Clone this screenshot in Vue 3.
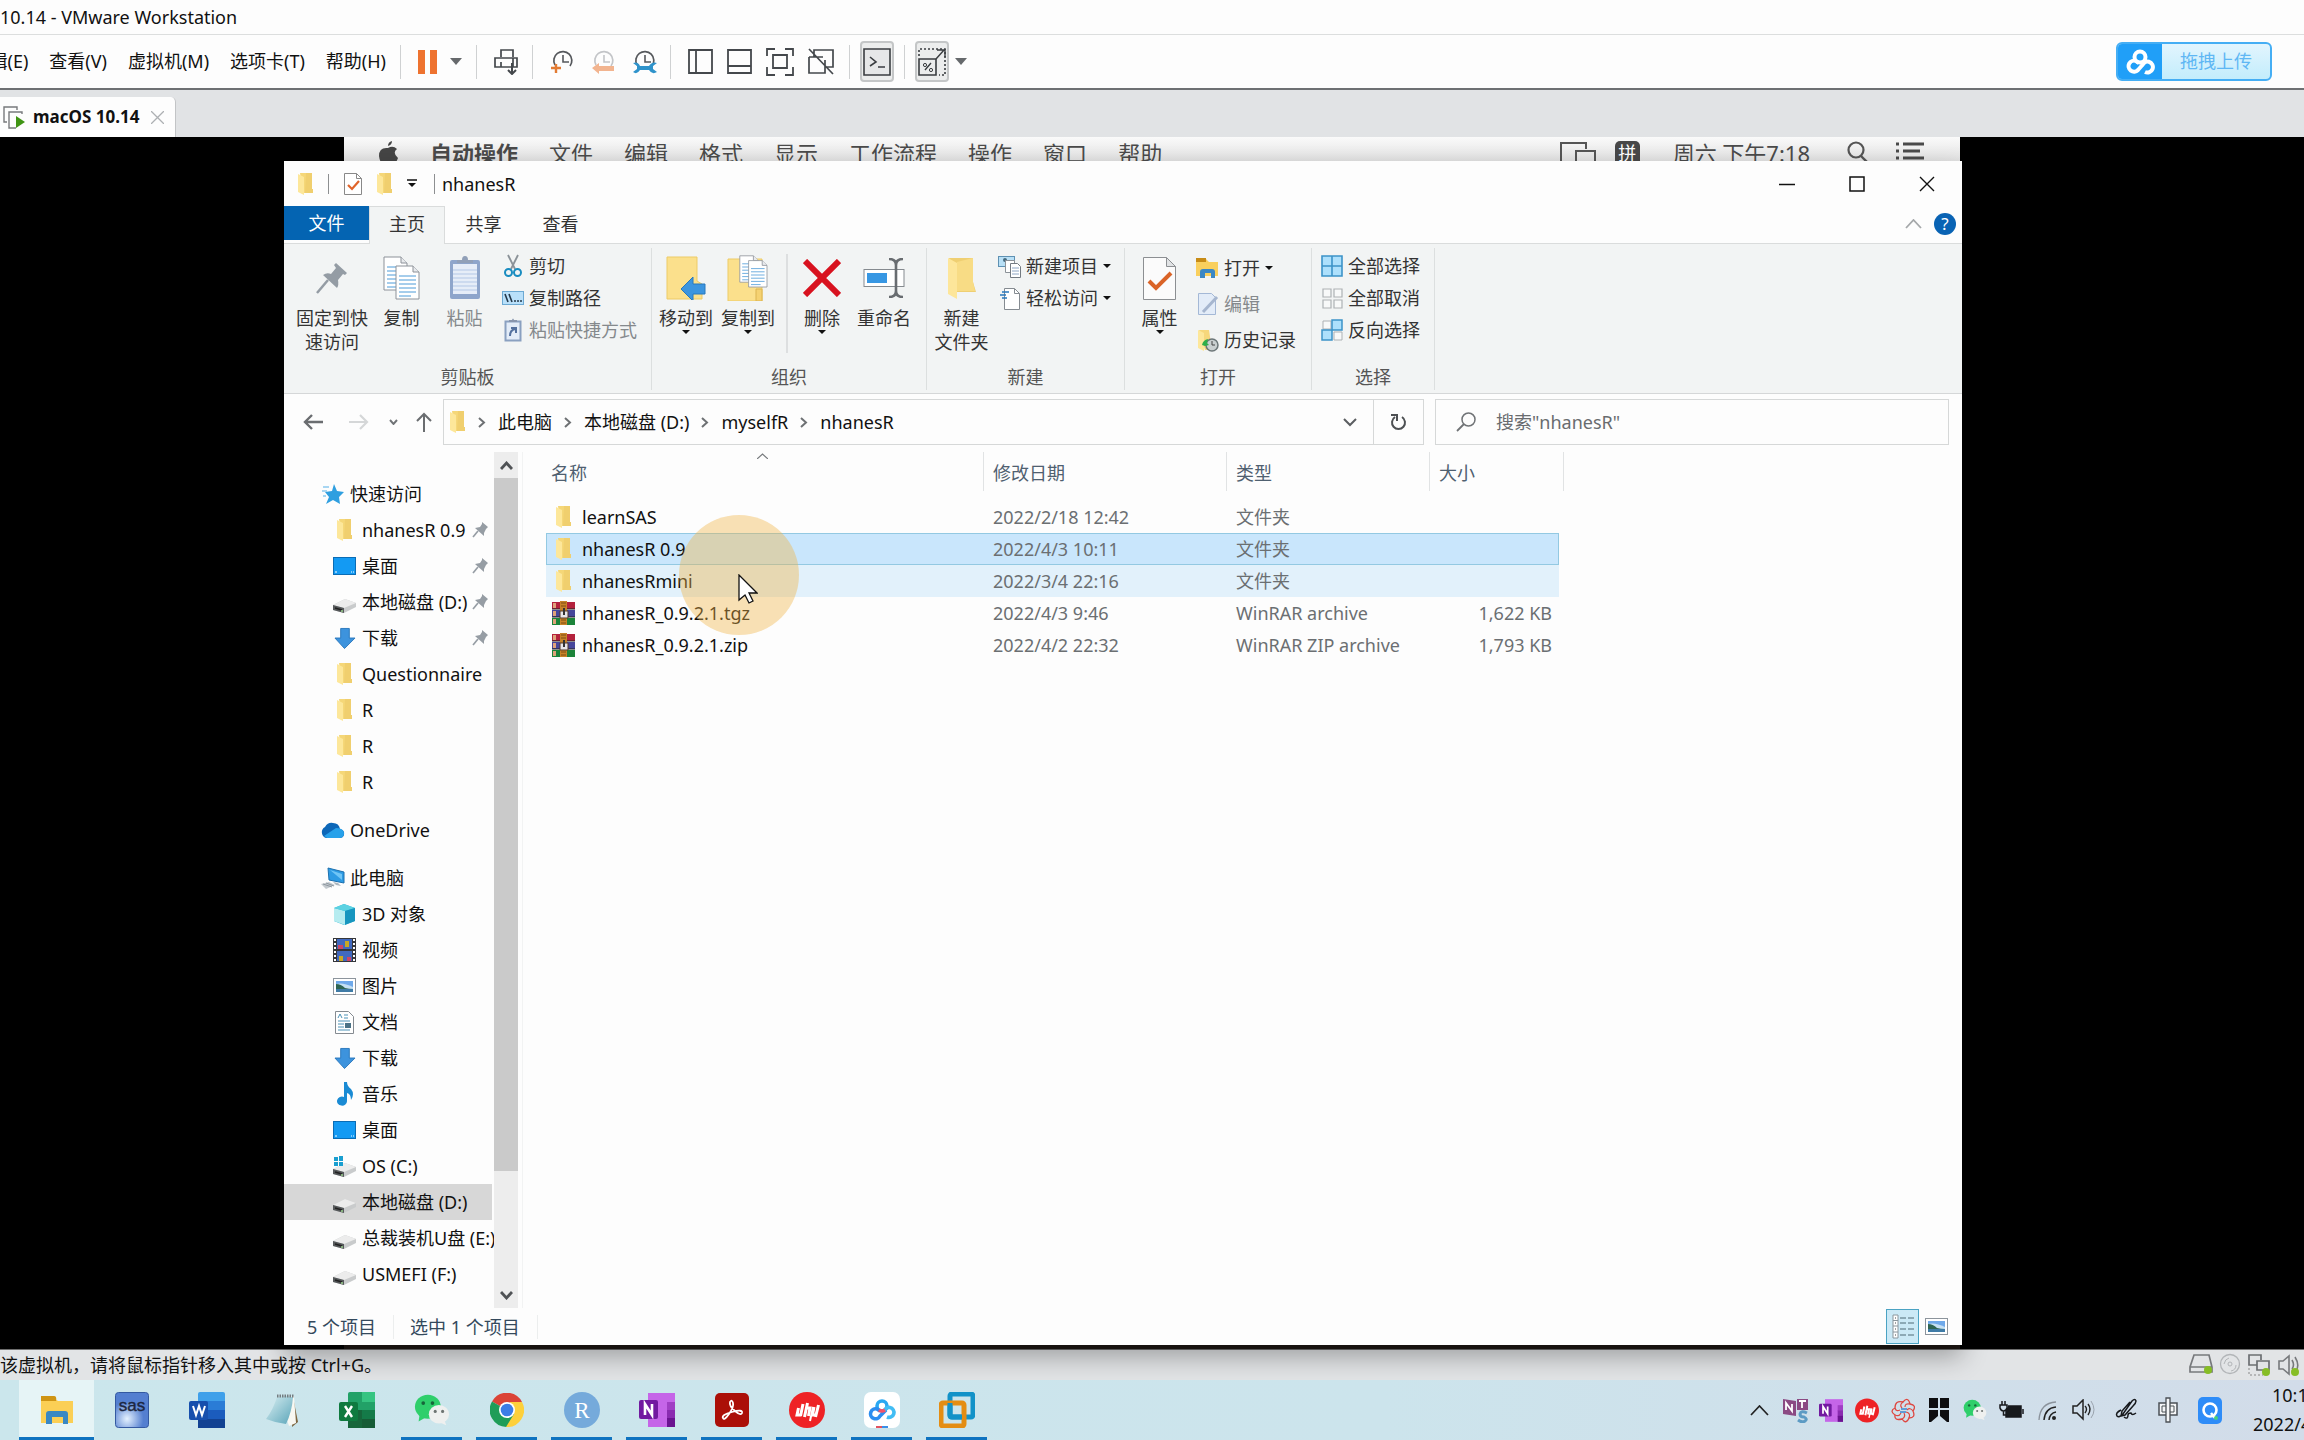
<template>
  <div class="desktop">
    <header class="vm-title">10.14 - VMware Workstation</header>

    <div class="vm-toolbar">
      <nav class="vm-menu">
        <button v-for="item in vmMenu" :key="item">{{ item }}</button>
      </nav>
      <div class="tool-group">
        <button class="tool" aria-label="暂停"><Icon name="pause" /></button>
        <button class="tool slim" aria-label="电源选项"><Icon name="caretGrey" /></button>
      </div>
      <div class="tool-group"><button class="tool" aria-label="发送"><Icon name="send" /></button></div>
      <div class="tool-group wide">
        <button v-for="n in ['snapTake', 'snapRevert', 'snapManage']" :key="n" class="tool" :aria-label="n"><Icon :name="n" /></button>
      </div>
      <div class="tool-group views">
        <button v-for="n in ['viewSide', 'viewBottom', 'viewFull', 'viewUnity']" :key="n" class="tool" :aria-label="n"><Icon :name="n" /></button>
      </div>
      <div class="tool-group boxed"><button class="tool pressed" aria-label="控制台"><Icon name="console" /></button></div>
      <div class="tool-group boxed">
        <button class="tool pressed" aria-label="拉伸"><Icon name="stretch" /></button>
        <button class="tool slim" aria-label="拉伸选项"><Icon name="caretGrey" /></button>
      </div>
      <button class="upload">
        <span class="upload-logo"><Icon name="netdisk" /></span>
        <span class="upload-text">拖拽上传</span>
      </button>
    </div>

    <div class="vm-tabs">
      <div class="vm-tab">
        <Icon name="vmRunning" />
        <span>macOS 10.14</span>
        <button aria-label="关闭标签"><Icon name="tabClose" /></button>
      </div>
    </div>

    <main class="vm-screen">
      <div class="mac-bar">
        <Icon name="apple" />
        <b>自动操作</b>
        <span v-for="item in macMenu" :key="item">{{ item }}</span>
        <div class="mac-right">
          <Icon name="macDisplays" />
          <span class="mac-ime">拼</span>
          <span class="mac-clock">周六 下午7:18</span>
          <Icon name="macSearch" />
          <Icon name="macList" />
        </div>
      </div>

      <section class="explorer">
        <div class="ex-title">
          <Icon name="folder" />
          <i class="bar"></i>
          <button aria-label="属性"><Icon name="docCheckSmall" /></button>
          <button aria-label="新建文件夹"><Icon name="folder" /></button>
          <button aria-label="自定义快速访问工具栏"><Icon name="qatCaret" /></button>
          <i class="bar last"></i>
          <h1>nhanesR</h1>
          <div class="win-buttons">
            <button aria-label="最小化"><Icon name="winMin" /></button>
            <button aria-label="最大化"><Icon name="winMax" /></button>
            <button aria-label="关闭"><Icon name="winClose" /></button>
          </div>
        </div>

        <div class="ex-tabs">
          <button class="file">文件</button>
          <button class="active">主页</button>
          <button>共享</button>
          <button>查看</button>
          <div class="ex-help">
            <button aria-label="折叠功能区"><Icon name="collapse" /></button>
            <button class="help" aria-label="帮助">?</button>
          </div>
        </div>

        <div class="ribbon">
          <div v-for="group in ribbon" :key="group.label" :class="['ribbon-group', group.id]">
            <div class="ribbon-body">
              <template v-for="(item, i) in group.big" :key="i">
                <i v-if="item.divider" class="divider"></i>
                <button v-else :class="['big', item.size, { off: item.off }]">
                  <span class="big-icon"><Icon :name="item.icon" /></span>
                  <span v-for="line in item.lines" :key="line" class="big-line">{{ line }}</span>
                  <Icon v-if="item.menu" name="caret" />
                </button>
              </template>
              <div class="small-list">
                <button v-for="item in group.small" :key="item.text" :class="{ off: item.off }">
                  <span class="small-icon"><Icon :name="item.icon" /></span>
                  {{ item.text }}
                  <Icon v-if="item.menu" name="caret" />
                </button>
              </div>
            </div>
            <div class="ribbon-label">{{ group.label }}</div>
          </div>
        </div>

        <div class="address-row">
          <button class="go" aria-label="后退"><Icon name="back" /></button>
          <button class="go" aria-label="前进"><Icon name="forward" /></button>
          <button class="go recent" aria-label="最近位置"><Icon name="chevDown" /></button>
          <button class="go up" aria-label="上移"><Icon name="up" /></button>
          <div class="address">
            <Icon name="folder" />
            <template v-for="part in path" :key="part">
              <Icon name="chevRight" />
              <button>{{ part }}</button>
            </template>
            <button class="drop" aria-label="以前的位置"><Icon name="chevDownBig" /></button>
            <button class="refresh" aria-label="刷新"><Icon name="refresh" /></button>
          </div>
          <label class="search">
            <Icon name="search" />
            <input v-model="query" type="text" placeholder='搜索"nhanesR"' aria-label="搜索" />
          </label>
        </div>

        <div class="ex-main">
          <nav class="tree">
            <ul v-for="(group, g) in tree" :key="g">
              <li v-for="(node, i) in group" :key="i" :class="{ child: i > 0, selected: node.selected }">
                <a href="#">
                  <span class="tree-icon"><Icon :name="node.icon" /></span>
                  <span>{{ node.text }}</span>
                </a>
                <Icon v-if="node.pin" class="tree-pin" name="pinSmall" />
              </li>
            </ul>
          </nav>
          <div class="scrollbar">
            <button aria-label="向上滚动"><Icon name="scrollUp" /></button>
            <div class="thumb"></div>
            <button aria-label="向下滚动"><Icon name="scrollDown" /></button>
          </div>
          <div class="list">
            <table>
              <thead>
                <tr>
                  <th class="c-name">名称<Icon class="sort" name="sortUp" /></th>
                  <th class="c-date">修改日期</th>
                  <th class="c-type">类型</th>
                  <th class="c-size">大小</th>
                  <th class="c-end"></th>
                </tr>
              </thead>
              <tbody>
                <tr v-for="file in files" :key="file.name" :class="file.state">
                  <td><div class="cell"><span class="file-icon"><Icon :name="file.icon" /></span>{{ file.name }}</div></td>
                  <td>{{ file.date }}</td>
                  <td>{{ file.type }}</td>
                  <td class="size">{{ file.size }}</td>
                </tr>
              </tbody>
            </table>
            <div class="halo"></div>
            <Icon class="cursor" name="cursor" />
          </div>
        </div>

        <footer class="ex-status">
          <span>5 个项目</span>
          <span>选中 1 个项目</span>
          <div class="ex-views">
            <button class="on" aria-label="详细信息"><Icon name="details" /></button>
            <button aria-label="大缩略图"><Icon name="picture" /></button>
          </div>
        </footer>
      </section>
      <div class="mac-edge"></div>
    </main>

    <div class="vm-status">
      <span>该虚拟机，请将鼠标指针移入其中或按 Ctrl+G。</span>
      <div class="vm-devices">
        <Icon v-for="n in ['devDisk', 'devCd', 'devNet', 'devSound']" :key="n" :name="n" />
      </div>
    </div>

    <footer class="taskbar">
      <div class="apps">
        <button v-for="app in apps" :key="app.icon" :class="{ running: app.running, active: app.active }" :aria-label="app.icon">
          <Icon :name="app.icon" />
        </button>
      </div>
      <div class="tray">
        <button v-for="n in tray" :key="n" :aria-label="n"><Icon :name="n" /></button>
      </div>
      <div class="tray ime">
        <button v-for="n in imeTray" :key="n" :aria-label="n"><Icon :name="n" /></button>
      </div>
      <div class="clock">
        <div>10:11</div>
        <div>2022/4/3</div>
      </div>
    </footer>
  </div>
</template>

<script setup>
import { ref, h } from 'vue';

const folderArt = '<path d="M3 1h12v16h1v4H6z" fill="#f5d778"/><path d="M9 1h6v16h1v4H8z" fill="#f0cf6e"/><path d="M1 2l6 3v18l-6-3z" fill="#fde79a"/>';
const sheet = (x, y) => `<path d="M${x} ${y}h17l6 6v27h-23z" fill="#fff" stroke="#8d9299"/><path d="M${x + 17} ${y}v6h6" fill="#e8eaed" stroke="#8d9299"/><path d="M${x + 3} ${y + 10}h17m-17 4h17m-17 4h17m-17 4h17m-17 4h17m-17 4h12" stroke="#4c9bd8"/>`;
const wechat = '<ellipse cx="15" cy="14" rx="14" ry="13" fill="#2fcf6b"/><path d="M6 23l-1 7 7-4z" fill="#2fcf6b"/><circle cx="10" cy="10" r="2" fill="#17653a"/><circle cx="20" cy="10" r="2" fill="#17653a"/><ellipse cx="27" cy="22" rx="11" ry="10" fill="#eef0ef"/><path d="M33 29l2 5-7-3z" fill="#eef0ef"/><circle cx="23" cy="19" r="1.7" fill="#6d7472"/><circle cx="31" cy="19" r="1.7" fill="#6d7472"/>';
const onenote = '<path d="M9 2h27v34H9z" fill="#c565e8"/><path d="M28 11h8v9h-8z" fill="#a03fc4"/><path d="M28 19h8v9h-8z" fill="#8a2bb0"/><path d="M28 27h8v9h-8z" fill="#6a1390"/><rect x="0" y="9" width="19" height="19" rx="2" fill="#721aa0"/><path d="M6 24V13l7 11V13" fill="none" stroke="#fff" stroke-width="2.6"/>';
const redApp = '<circle cx="18" cy="18" r="18" fill="#ee2225"/><path d="M9.500 16l-1.500 7h4M14 12l-2.500 12M18.500 11l-3 14M17.500 16h3.500l-1.500 8M25 15l-1.500 8h3M29.500 13l-3 12" fill="none" stroke="#fff" stroke-width="3"/><path d="M24 15l-3 14" stroke="#fff" stroke-width="2"/>';
const clockFace = '<path d="M5 16A9 9 0 1 1 20 17" fill="none" stroke="CLR" stroke-width="1.7"/><path d="M13 6v7h6" fill="none" stroke="CLR" stroke-width="1.6"/>';
const drive = '<path d="M0 15L12 9l11 4v4l-12 6-11-3z" fill="#c9cbcc"/><path d="M0 15l11 3 12-5-11-4z" fill="#ececec"/><path d="M0 15l11 3v5L0 20z" fill="#56595b"/><path d="M2 18l7 2" stroke="#222" stroke-width="1.500"/><circle cx="9" cy="21" r="1" fill="#9ad08c"/>';
const winrar = '<path d="M1 1h23v7H1z" fill="#b3213c"/><path d="M1 9h23v7H1z" fill="#46469b"/><path d="M1 17h23v7H1z" fill="#1b8339"/><path d="M1 8h23M1 16h23" stroke="#222"/><path d="M2 2h3v5H2zm0 8h3v5H2zm0 8h3v5H2z" fill="#dfa27a"/><path d="M9 0h7v24H9z" fill="#c78227"/><path d="M10 2h5m-5 3h5m-5 14h5m-5 3h5" stroke="#7d4c12"/><path d="M9 10h8v7H9z" fill="#e8e6ea" stroke="#553b2a"/><path d="M13 7v7" stroke="#333" stroke-width="2"/>';
const picture = '<rect x=".5" y=".5" width="22" height="16" fill="#fff" stroke="#8c949c"/><path d="M3 3h17v11H3z" fill="#6fa9ea"/><path d="M3 6q7-2 17 3v2H3z" fill="#c5e0f4"/><path d="M3 6q5 0 9 4 4 1 8 1H3z" fill="#2f6552"/><path d="M3 11h17v3H3z" fill="#3f7ba6"/>';
const download = '<path d="M7 1h9v10h6L11 22 1 11h6z" fill="#3d93dd" stroke="#2b79bd"/>';
const desktopIcon = '<rect x=".5" y=".5" width="22" height="17" fill="#139af3" stroke="#0a6cb5"/><path d="M2 15h2m14 0h1m1 0h1" stroke="#fff"/>';

// name: [width, height, markup, optional viewBox]
const icons = {
  pause: [20, 26, '<path d="M0 1h7v24H0zM12 1h7v24h-7z" fill="#ee7330"/>'],
  caretGrey: [12, 7, '<path d="M0 0h12L6 7z" fill="#66696c"/>'],
  caret: [8, 4, '<path d="M0 0h8L4 4z" fill="#111"/>'],
  send: [24, 26, '<path d="M7 8V1h12v7M1 9h22v9H1zM7 13v5M7 9h12v9" fill="none" stroke="#44484c" stroke-width="1.7"/><path d="M18 14v11m-4-4l4 4 4-4" fill="none" stroke="#44484c" stroke-width="2"/>'],
  snapTake: [26, 26, clockFace.replaceAll('CLR', '#55585c') + '<path d="M6 15v9M1 19h10" stroke="#e27b33" stroke-width="2.4"/>'],
  snapRevert: [26, 26, clockFace.replaceAll('CLR', '#c3c5c8') + '<path d="M1 19l7-5v3h15v5H8v3z" fill="#f2b48f"/>'],
  snapManage: [26, 26, clockFace.replaceAll('CLR', '#55585c') + '<path d="M1 14q5-2 7 3h9q3-5 8-3l-4 3v3l4 3q-5 3-8-2H8q-3 5-7 2l4-3v-3z" fill="#2f93cb"/>'],
  viewSide: [26, 26, '<path d="M1 1h23v23H1zM8 1v23" fill="none" stroke="#44484c" stroke-width="1.8"/>'],
  viewBottom: [26, 26, '<path d="M1 1h23v23H1zM1 17h23" fill="none" stroke="#44484c" stroke-width="1.8"/>'],
  viewFull: [28, 28, '<path d="M1 8V1h8m10 0h8v7m0 11v8h-8M9 27H1v-8M7 7h14v13H7z" fill="none" stroke="#44484c" stroke-width="1.8"/>'],
  viewUnity: [28, 28, '<path d="M7 9V2h19v17h-7M2 9h14m2 3v13H2V9M2 1l24 25" fill="none" stroke="#44484c" stroke-width="1.7"/>'],
  console: [28, 28, '<path d="M1 1h26v26H1z" fill="#e6e7e8" stroke="#3a3d40" stroke-width="1.6"/><path d="M7 9l6 5-6 4m8 1h7" fill="none" stroke="#3a3d40" stroke-width="1.6"/>'],
  stretch: [28, 28, '<path d="M1 11h17v16H1z" fill="none" stroke="#3a3d40" stroke-width="1.6"/><path d="M1 8V1h26v26h-6" fill="none" stroke="#3a3d40" stroke-width="1.6" stroke-dasharray="2 2"/><path d="M18 11L26 2m-7 0h8v7M7 22l6-7" fill="none" stroke="#3a3d40" stroke-width="1.4"/><circle cx="7" cy="17" r="1.6" fill="none" stroke="#3a3d40"/><circle cx="13" cy="22" r="1.6" fill="none" stroke="#3a3d40"/>'],
  netdisk: [30, 26, '<g fill="none" stroke="#fff" stroke-width="4"><circle cx="15" cy="8" r="5.5"/><path d="M20 13l-7 8a5.5 5.5 0 1 1-2-9l3 2M17 17a5.500 5.500 0 1 1 3 6"/></g>'],
  vmRunning: [24, 24, '<path d="M4 17H1V2h13v3M19 9V7H6v16h7" fill="none" stroke="#77797c" stroke-width="1.4"/><path d="M13 11l9 6-9 6z" fill="#3f9413"/>'],
  tabClose: [13, 13, '<path d="M0 0l13 13M13 0L0 13" stroke="#adb0b3" stroke-width="1.3"/>'],
  apple: [22, 24, '<path d="M15 0q0 4-4 5 0-4 4-5zM11 7q5-3 9 1-5 4 1 9-3 8-6 7-4-2-7 0-5-1-6-9 0-9 9-8z" fill="#454545"/>'],
  macDisplays: [36, 24, '<path d="M14 21H1V2h25v6M16 10h19v14H16z" fill="none" stroke="#555" stroke-width="2"/>'],
  macSearch: [22, 22, '<circle cx="9" cy="9" r="7.500" fill="none" stroke="#555" stroke-width="2.2"/><path d="M14 15l6 6" stroke="#555" stroke-width="2.4"/>'],
  macList: [28, 20, '<path d="M0 3h3m4 0h21M0 10h3m4 0h17M0 17h3m4 0h21" stroke="#4a4a4a" stroke-width="3"/>'],
  folder: [17, 24, folderArt],
  docCheckSmall: [18, 22, '<path d="M.5.5h12l5 5v16H.5z" fill="#fff" stroke="#888"/><path d="M12.500 .5v5h5" fill="none" stroke="#888"/><path d="M4 12l4 4 7-8" fill="none" stroke="#e0642a" stroke-width="2.2"/>'],
  qatCaret: [10, 9, '<path d="M0 1h10" stroke="#111" stroke-width="1.500"/><path d="M1 4h8L5 8z" fill="#111"/>'],
  winMin: [16, 16, '<path d="M0 8.500h16" stroke="#111" stroke-width="1.500"/>'],
  winMax: [16, 16, '<path d="M1 1h14v14H1z" fill="none" stroke="#111" stroke-width="1.500"/>'],
  winClose: [16, 16, '<path d="M1 1l14 14M15 1L1 15" stroke="#111" stroke-width="1.400"/>'],
  collapse: [17, 10, '<path d="M1 9l7.500-8L16 9" fill="none" stroke="#a5a8aa" stroke-width="1.800"/>'],
  pin: [32, 32, '<path d="M20 1l11 10-2 2-2-1-5 6q1 5-1 8L7 13q4-3 8-1l5-6-2-3z" fill="#949ca4"/><path d="M12 18L1 31" stroke="#949ca4" stroke-width="2.500"/>'],
  copy: [38, 44, sheet(1, 1) + sheet(13, 10)],
  paste: [32, 44, '<rect x="1" y="4" width="30" height="39" rx="2" fill="#8ea5cb"/><path d="M4 8h24v30H4z" fill="#e6edf8"/><path d="M8 7V4h5q0-4 3-4t3 4h5v3z" fill="#91a0b8"/><path d="M4 14h24M4 18h24M4 22h24M4 26h24M4 30h24M4 34h24" stroke="#b3c7e6"/>'],
  cut: [18, 24, '<path d="M4 1l7 14M14 1L7 15" stroke="#8b9298" stroke-width="1.800"/><circle cx="4.500" cy="18.500" r="3.500" fill="none" stroke="#198cc0" stroke-width="2"/><circle cx="13.500" cy="18.500" r="3.500" fill="none" stroke="#198cc0" stroke-width="2"/>'],
  copyPath: [22, 14, '<rect x=".5" y=".5" width="21" height="13" fill="#b9e0fa" stroke="#6ca9d3"/><path d="M3 3l3 8m1-8l3 8m2-1h2m1 0h2m1 0h2" stroke="#24384a" stroke-width="1.600"/>'],
  pasteLink: [18, 24, '<rect x="1.500" y="3.500" width="15" height="19" fill="#e3ecf8" stroke="#8aa0c0" stroke-width="2"/><path d="M5 4V2h3q1-3 2 0h3v2z" fill="#8895ad"/><path d="M6 18q0-6 5-7M7 10h5v5" fill="none" stroke="#54719f" stroke-width="2"/>'],
  moveTo: [40, 44, '<path d="M1 1h30v24l5 3v15H1z" fill="#fbe08c" stroke="#edcb66"/><path d="M15 33l12-12v7h12v10H27v7z" fill="#3c95df" stroke="#2878bd"/>'],
  copyTo: [42, 46, '<path d="M1 4h34v42H1z" fill="#fbe08c" stroke="#edcb66"/><path d="M29 34h6v12h-6z" fill="#f5d272" stroke="#dcb450"/><g transform="translate(12 0) scale(.8)">' + sheet(1, 1) + sheet(12, 7) + '</g>'],
  remove: [38, 38, '<path d="M2 2l34 34M36 2L2 36" stroke="#d8121f" stroke-width="6"/>'],
  rename: [42, 40, '<rect x="1" y="11.500" width="40" height="17" fill="#fff" stroke="#858a8f"/><path d="M4 15h20v10H4z" fill="#3797e3"/><path d="M26 1q7 0 7 6v26q0 6-7 6M40 1q-7 0-7 6v26q0 6 7 6" fill="none" stroke="#686c70" stroke-width="2.600"/>'],
  newFolder: [30, 42, '<path d="M2 1h24v24l3 10H10z" fill="#efcf72"/><path d="M10 5l16-4v24l2 9H10z" fill="#f8dc85"/><path d="M1 1l9 5v36l-9-5z" fill="#fde69a"/>'],
  newItem: [23, 23, '<rect x=".5" y="1.500" width="16" height="10" fill="#b9e0f6" stroke="#5e91b3"/><circle cx="7" cy="5" r="2" fill="#476b80"/><path d="M7.500 5.500h9v12h-9z" fill="#fff" stroke="#8c9298"/><path d="M12.500 8.500h7l3 3v11h-10z" fill="#fff" stroke="#747b82"/><path d="M14 13h7m-7 3h7m-7 3h7" stroke="#8ea6c4"/>'],
  easyAccess: [20, 23, '<path d="M4.500 1.500h10l5 5v16h-15z" fill="#fff" stroke="#858b91"/><path d="M14.500 1.500v5h5" fill="none" stroke="#858b91"/><path d="M2 5h7M0 8h6m-4 3h5" stroke="#2878bd" stroke-width="1.500"/>'],
  properties: [33, 43, '<path d="M.5.500h23l9 9v33H.5z" fill="#fbfbfb" stroke="#8c8f92"/><path d="M23.500 .5v9h9z" fill="#e1e3e5" stroke="#8c8f92"/><path d="M6 24l7 7 15-15" fill="none" stroke="#da6428" stroke-width="4"/>'],
  open: [24, 22, '<path d="M0 2h10l3 3h9v14H0z" fill="#f9cf5d"/><path d="M0 1h10v4H0z" fill="#c78b16"/><path d="M4 21v-6q0-3 3-3h9q3 0 3 3v6h-4v-5H9v5z" fill="#3b87c4"/>'],
  edit: [22, 23, '<path d="M1.500 .5h13l4 4v17h-17z" fill="#e3ecf8" stroke="#a4b8d6"/><path d="M6 19L20 4" stroke="#a6b6cf" stroke-width="3"/>'],
  history: [22, 23, '<path d="M2 1h10l3 20H8z" fill="#f6d77b"/><path d="M1 1l6 3v18l-6-3z" fill="#fde79a"/><circle cx="15" cy="16" r="6" fill="#c9cfd0" stroke="#6c7678" stroke-width="1.500"/><path d="M15 12v4h3" fill="none" stroke="#444"/><path d="M5 16q1-5 6-6l-1 4 2 2-4 1z" fill="#2fae4a"/>'],
  selectAll: [22, 22, '<path d="M1 1h20v20H1zM11 1v20M1 11h20" fill="#ade0fc" stroke="#3c93c8" stroke-width="1.600"/>'],
  selectNone: [22, 22, '<path d="M2 2h8v8H2zm11 0h8v8h-8zM2 13h8v8H2zm11 0h8v8h-8z" fill="#f8f9f9" stroke="#adb1b4" stroke-width="1.200"/>'],
  selectInvert: [22, 22, '<path d="M2 2h8v8H2zm11 11h8v8h-8z" fill="#f8f9f9" stroke="#adb1b4"/><path d="M11 1h10v10H11zM1 11h10v10H1z" fill="#ade0fc" stroke="#3c93c8" stroke-width="1.500"/>'],
  back: [20, 16, '<path d="M20 8H2m7-7L2 8l7 7" fill="none" stroke="#6a6d70" stroke-width="2.400"/>'],
  forward: [20, 16, '<path d="M0 8h18m-7-7l7 7-7 7" fill="none" stroke="#d5d7d8" stroke-width="2.200"/>'],
  chevDown: [9, 6, '<path d="M1 1l3.500 4L8 1" fill="none" stroke="#707376" stroke-width="1.900"/>'],
  up: [16, 20, '<path d="M8 20V2M1 9l7-7 7 7" fill="none" stroke="#6a6d70" stroke-width="2"/>'],
  chevRight: [8, 11, '<path d="M1 1l5 4.500L1 10" fill="none" stroke="#6e7174" stroke-width="2"/>'],
  chevDownBig: [14, 9, '<path d="M1 1l6 6 6-6" fill="none" stroke="#5b5e61" stroke-width="2"/>'],
  refresh: [17, 18, '<path d="M12 4A6.500 6.500 0 1 1 5 4M1 2h6v6" fill="none" stroke="#4d5053" stroke-width="2"/>'],
  search: [20, 20, '<circle cx="12.500" cy="7.500" r="6.500" fill="none" stroke="#707376" stroke-width="1.500"/><path d="M8 12l-7 7" stroke="#707376" stroke-width="1.800"/>'],
  star: [22, 22, '<path d="M12 1l3 7 7 1-5 5 1 7-7-4-7 4 3-7-4-5 7-1z" fill="#2f9fe0"/><path d="M1 4h6M0 8h5M1 13h3" stroke="#8cc9ee" stroke-width="1.500"/>'],
  desktop: [23, 18, desktopIcon],
  drive: [23, 24, drive],
  driveOs: [23, 24, drive + '<path d="M1 3h4v4H1zm5-1h4v5H6zM1 8h4v4H1zm5 0h4v4H6z" fill="#1a9fd0"/>'],
  download: [22, 23, download, '0 0 23 23'],
  onedrive: [25, 17, '<path d="M6 16a6 6 0 0 1-1-11Q8 0 13 1q6 0 7 6 5 1 4 6-1 3-4 3z" fill="#0d67b8"/><path d="M4 14L16 6q7 0 8 5 0 5-5 5H7z" fill="#27a1ea"/>'],
  pc: [24, 22, '<path d="M7 1l16 4v11L8 13z" fill="#2e9be4" stroke="#1c70ae"/><path d="M9 3l12 4v6z" fill="#70c5f6"/><path d="M12 15l5 1 3 3-5-1z" fill="#aeb7bf"/><path d="M0 17l8-2 6 3-9 4z" fill="#c3c9ce"/><path d="M2 17l9 3m-6-4l8 3" stroke="#8e979f"/>'],
  cube: [23, 23, '<path d="M1 5l10-4 11 4v13l-11 4-10-4z" fill="#29b6d8"/><path d="M1 5l11 3v14L1 18z" fill="#b6ecf0"/><path d="M1 5l10-4 11 4-10 3z" fill="#5cd2e2"/><path d="M12 8l10-3v13l-10 4z" fill="#1796bf"/>'],
  video: [23, 24, '<path d="M0 0h23v24H0z" fill="#35363a"/><path d="M4 1h15v10H4zm0 12h15v10H4z" fill="#4169bf"/><path d="M5 7h5v4H5zm9 12h4v4h-4z" fill="#cc4668"/><path d="M12 3h4v6h-4zm-6 15h4v5H6z" fill="#c9a823"/><path d="M2 1v22m19-22v22" stroke="#fff" stroke-width="2" stroke-dasharray="2 2"/>'],
  picture: [23, 17, picture],
  document: [19, 23, '<path d="M.5.500h13l5 5v17H.5z" fill="#fff" stroke="#858b91"/><path d="M3 7l2-4 2 4m2-3h4M9 7h4M3 10h12M3 13h6m-6 3h6m-6 3h12" fill="none" stroke="#4c93b7"/><path d="M10 12h6v5h-6z" fill="#4b7286"/>'],
  music: [18, 24, '<path d="M8 0h3q0 4 4 7 4 5 0 11 0-6-4-7v8a5 4.500 0 1 1-3-4z" fill="#1a8bd4"/>'],
  pinSmall: [16, 16, '<path d="M10 0l6 5-2 2-2 4v3L3 6l5-1 2-3z" fill="#969da4"/><path d="M6 9l-5 6" stroke="#969da4" stroke-width="1.700"/>'],
  scrollUp: [13, 9, '<path d="M1 8l5.500-6L12 8" fill="none" stroke="#505356" stroke-width="2.800"/>'],
  scrollDown: [13, 9, '<path d="M1 1l5.500 6L12 1" fill="none" stroke="#505356" stroke-width="2.800"/>'],
  sortUp: [11, 6, '<path d="M0 6l5.500-5L11 6" fill="none" stroke="#777a7d" stroke-width="1.200"/>'],
  winrar: [25, 25, winrar],
  cursor: [20, 30, '<path d="M1 1v25l6-5 4 8 4-2-4-8h8z" fill="#fff" stroke="#111" stroke-width="1.300"/>'],
  details: [22, 26, '<path d="M1 1h5v23H1zM1 6.500h5M1 12h5m-5 6h5" fill="#fff" stroke="#8a969d"/><path d="M3 4h1m-1 5h1m-1 6h1m-1 6h1" stroke="#444"/><path d="M8 4h6m2 0h6M8 9h6m2 0h6M8 15h6m2 0h6M8 21h6m2 0h6" stroke="#4e6a76"/>'],
  devDisk: [24, 22, '<path d="M5 2h15l3 12v5H1v-5zM1 14h22" fill="none" stroke="#77797c" stroke-width="1.700"/><circle cx="19" cy="17" r="4" fill="#86bd25"/>'],
  devCd: [22, 22, '<circle cx="11" cy="11" r="9.500" fill="none" stroke="#b2b5b8" stroke-width="1.300"/><circle cx="11" cy="11" r="2" fill="none" stroke="#b2b5b8"/><path d="M5 11q1-5 5-6m2 13q5-1 5-6" fill="none" stroke="#b2b5b8"/>'],
  devNet: [24, 24, '<path d="M10 12H2V2h12v5M10 8h12v9H10z" fill="none" stroke="#6c6f72" stroke-width="1.700"/><path d="M2 15v7h14" fill="none" stroke="#888" stroke-dasharray="2 2"/><circle cx="19" cy="19" r="4" fill="#86bd25"/>'],
  devSound: [24, 24, '<path d="M2 8h4l6-5v18l-6-5H2zM15 7q3 5 0 9m3-12q5 8 1 14" fill="none" stroke="#77797c" stroke-width="1.600"/><circle cx="18" cy="19" r="4" fill="#86bd25"/>'],
  explorer: [34, 30, '<path d="M1 3h13l4 3h15v22H1z" fill="#fbcf55"/><path d="M1 1h13q3 0 2 5H1z" fill="#cf9414"/><path d="M6 29V19q0-3 3-3h16q3 0 3 3v10h-5v-7H12v7z" fill="#3988c4"/>'],
  sas: [34, 36, '<defs><radialGradient id="sasg" cx=".35" cy=".75"><stop offset="0" stop-color="#e5f2ff"/><stop offset="1" stop-color="#547fd0"/></radialGradient></defs><rect x=".5" y=".5" width="33" height="35" rx="3" fill="url(#sasg)" stroke="#3459a1"/><text x="17" y="19" text-anchor="middle" font-family="Liberation Sans" font-size="17" fill="#1c2740" stroke="#1c2740" stroke-width=".4">sas</text>'],
  word: [36, 36, '<rect x="9" y="0" width="27" height="36" rx="2" fill="#3fa0ea"/><path d="M9 9h27v9H9z" fill="#2a7cd6"/><path d="M9 18h27v9H9z" fill="#1b5cbd"/><path d="M9 27h27v9H9z" fill="#124292"/><rect x="0" y="9" width="19" height="19" rx="2" fill="#174fad"/><path d="M4 14l3 9 3-9 3 9 3-9" fill="none" stroke="#fff" stroke-width="2"/>'],
  notepad: [34, 34, '<defs><linearGradient id="npg" x1="0" y1="0" x2="1" y2="1"><stop offset="0" stop-color="#dcf0f3"/><stop offset="1" stop-color="#5aa5b9"/></linearGradient></defs><path d="M28 4l5 25-6 5z" fill="#7d6640"/><path d="M14 3h15l2 27-7 3z" fill="#f8f8f2"/><path d="M12 4q8-2 16 0-1 15-7 27-10-1-20-5Q8 17 12 4z" fill="url(#npg)"/><path d="M12 3h17" stroke="#747c80" stroke-width="3" stroke-dasharray="1.500 1"/>'],
  excel: [36, 36, '<rect x="9" y="0" width="27" height="36" rx="2" fill="#22a167"/><path d="M23 0h13v10H23z" fill="#36c481"/><path d="M23 18h13v9H23z" fill="#147a48"/><path d="M9 18h14v18H9z" fill="#16663b"/><path d="M23 27h13v9H23z" fill="#165c36"/><rect x="0" y="10" width="19" height="19" rx="2" fill="#0f7a3f"/><path d="M6 14l7 11m0-11l-7 11" stroke="#fff" stroke-width="2.400"/>'],
  wechat: [36, 34, wechat, '0 0 39 35'],
  chrome: [34, 34, '<path d="M17 17L2 8.500A17 17 0 0 1 32 9z" fill="#db4437"/><path d="M2 8.500A17 17 0 0 0 17 34l8-13-8-4z" fill="#1f9d58"/><path d="M32 9A17 17 0 0 1 16 34l8-13-4-12z" fill="#fdd03b"/><circle cx="17" cy="17" r="8" fill="#fff"/><circle cx="17" cy="17" r="6.300" fill="#3c7de6"/>'],
  rstudio: [36, 36, '<circle cx="18" cy="18" r="18" fill="#75aadb"/><text x="18" y="26" text-anchor="middle" font-family="Liberation Serif" font-size="23" fill="#fff">R</text>'],
  onenote: [36, 36, onenote, '0 1 36 36'],
  acrobat: [34, 34, '<rect width="34" height="34" rx="5" fill="#ab0f08"/><path d="M8 25q-2-3 9-6t10 1q-1 3-7-2t-5-9q2-3 3 1t-4 11-6 4z" fill="none" stroke="#fff" stroke-width="1.800"/>'],
  redApp: [36, 36, redApp],
  baidu: [36, 36, '<rect width="36" height="36" rx="7" fill="#fff"/><g fill="none" stroke-width="3.600"><circle cx="18" cy="14" r="5" stroke="#29a8f2"/><path d="M22 18l-6 6a5 5 0 1 1-3-7l3 2" stroke="#2b8df0"/><path d="M20 20a5 5 0 1 1 3 5" stroke="#42bdf4"/><path d="M15 18q3 2 6 0" stroke="#f2536b"/></g><path d="M12 35h6" stroke="#e35260" stroke-width="2"/><path d="M18 35h6" stroke="#3a8fe8" stroke-width="2"/>'],
  vmware: [36, 36, '<rect x="11" y="2" width="23" height="23" rx="2" fill="none" stroke="#1292c8" stroke-width="5"/><rect x="2" y="11" width="23" height="23" rx="2" fill="none" stroke="#e48d13" stroke-width="5"/><path d="M11 11v12q0 2 2 2h10" fill="none" stroke="#1292c8" stroke-width="5"/>'],
  trayUp: [19, 11, '<path d="M1 10l8.500-9L18 10" fill="none" stroke="#222" stroke-width="1.700"/>'],
  trayNts: [25, 25, '<path d="M0 1l13 2v15L0 16zM14 1h11v11H14z" fill="#8b4a83"/><path d="M3 12V5l6 8V6m7-3h7m-4 0v7" fill="none" stroke="#fff" stroke-width="1.800"/><path d="M24 15q-6-3-7 1 0 3 4 3 4 2 1 4-3 2-7-1" fill="none" stroke="#5c9bc4" stroke-width="3"/>'],
  trayOnenote: [24, 25, onenote, '0 1 36 36'],
  trayRed: [24, 25, redApp, '0 0 36 36'],
  trayFlower: [24, 25, '<path d="M12 4q5-6 7 2 7 1 3 7 3 7-4 7-3 7-7 1-8 2-7-4-6-4 0-7 0-8 8-6z" fill="none" stroke="#de4741" stroke-width="1.300"/><path d="M12 4q-4 3-1 6M19 6q-5-1-5 3M22 13q-3-4-6-1M18 20q2-5-3-6M11 21q4-2 2-6M4 17q4 2 6-2M4 10q1 4 5 2" fill="none" stroke="#de4741" stroke-width="1.200"/><path d="M9 14h6m-5-3h6" stroke="#3d86d0" stroke-width="1.500"/>'],
  trayFlags: [20, 24, '<path d="M0 0h9v10H0zm11 0h9v10h-9zM0 12h9v6l-7 6H0zm11 0h9v12h-2l-7-6z" fill="#0e0e10"/>'],
  trayWechat: [24, 22, wechat, '0 0 39 35'],
  trayBattery: [25, 18, '<path d="M9 5h13v11H7V9" fill="#17191c" stroke="#17191c" stroke-width="1.500"/><path d="M24 8v5M1 4h7v3q-1 3-3.500 3T1 7zM3 4V0m3 4V0M4.500 10v4H7" fill="none" stroke="#17191c" stroke-width="1.500"/>'],
  trayWifi: [20, 21, '<circle cx="17" cy="18" r="2" fill="#222"/><path d="M12 20a8 8 0 0 1 7-8M7 20Q8 8 19 7" fill="none" stroke="#222" stroke-width="1.500"/><path d="M2 20Q3 3 19 2" fill="none" stroke="#8b939c" stroke-width="1.300"/>'],
  traySound: [23, 22, '<path d="M1 7h4l6-6v19l-6-6H1z" fill="none" stroke="#222" stroke-width="1.500"/><path d="M13 7q3 3 0 7m3-9q4 5 0 11" fill="none" stroke="#222" stroke-width="1.400"/><path d="M19 2q6 9 0 17" fill="none" stroke="#9aa3ad"/>'],
  trayPen: [22, 24, '<path d="M6 12q-6 3-4 6 2 2 6-2L17 3q3-3 4 0 0 2-3 5l-8 9-4 1 1-5L15 4" fill="none" stroke="#17191c" stroke-width="1.500"/><path d="M9 19q4 3 4-2 0-2 3-2 1 3 5 0" fill="none" stroke="#17191c" stroke-width="1.500"/>'],
  trayZh: [20, 26, '<path d="M1 6h18v12H1z" fill="#f6f7f8" stroke="#4b5055" stroke-width="1.500"/><path d="M4 9h12v6H4z" fill="none" stroke="#4b5055"/><path d="M8 1h4v24H8z" fill="#f6f7f8" stroke="#4b5055" stroke-width="1.300"/>'],
  trayQ: [24, 27, '<rect width="24" height="27" rx="5" fill="#2e8cf8"/><circle cx="12" cy="13" r="6.500" fill="none" stroke="#fff" stroke-width="2.600"/><path d="M13 16l4 5" stroke="#fff" stroke-width="2.500"/><circle cx="18" cy="21" r="2" fill="#4bd07a"/>'],
};

const Icon = ({ name }) => {
  const [width, height, markup, viewBox] = icons[name];
  return h('svg', { width, height, viewBox: viewBox || `0 0 ${width} ${height}`, 'aria-hidden': 'true', innerHTML: markup });
};
Icon.props = ['name'];

const query = ref('');

const vmMenu = ['编辑(E)', '查看(V)', '虚拟机(M)', '选项卡(T)', '帮助(H)'];
const macMenu = ['文件', '编辑', '格式', '显示', '工作流程', '操作', '窗口', '帮助'];
const path = ['此电脑', '本地磁盘 (D:)', 'myselfR', 'nhanesR'];

const ribbon = [
  {
    id: 'clipboard',
    label: '剪贴板',
    big: [
      { icon: 'pin', lines: ['固定到快', '速访问'], size: 'xl' },
      { icon: 'copy', lines: ['复制'] },
      { icon: 'paste', lines: ['粘贴'], off: true },
    ],
    small: [
      { icon: 'cut', text: '剪切' },
      { icon: 'copyPath', text: '复制路径' },
      { icon: 'pasteLink', text: '粘贴快捷方式', off: true },
    ],
  },
  {
    id: 'organize',
    label: '组织',
    big: [
      { icon: 'moveTo', lines: ['移动到'], menu: true },
      { icon: 'copyTo', lines: ['复制到'], menu: true },
      { divider: true },
      { icon: 'remove', lines: ['删除'], menu: true },
      { icon: 'rename', lines: ['重命名'] },
    ],
    small: [],
  },
  {
    id: 'new',
    label: '新建',
    big: [{ icon: 'newFolder', lines: ['新建', '文件夹'] }],
    small: [
      { icon: 'newItem', text: '新建项目', menu: true },
      { icon: 'easyAccess', text: '轻松访问', menu: true },
    ],
  },
  {
    id: 'open',
    label: '打开',
    big: [{ icon: 'properties', lines: ['属性'], menu: true }],
    small: [
      { icon: 'open', text: '打开', menu: true },
      { icon: 'edit', text: '编辑', off: true },
      { icon: 'history', text: '历史记录' },
    ],
  },
  {
    id: 'select',
    label: '选择',
    big: [],
    small: [
      { icon: 'selectAll', text: '全部选择' },
      { icon: 'selectNone', text: '全部取消' },
      { icon: 'selectInvert', text: '反向选择' },
    ],
  },
];

const tree = [
  [
    { icon: 'star', text: '快速访问' },
    { icon: 'folder', text: 'nhanesR 0.9', pin: true },
    { icon: 'desktop', text: '桌面', pin: true },
    { icon: 'drive', text: '本地磁盘 (D:)', pin: true },
    { icon: 'download', text: '下载', pin: true },
    { icon: 'folder', text: 'Questionnaire' },
    { icon: 'folder', text: 'R' },
    { icon: 'folder', text: 'R' },
    { icon: 'folder', text: 'R' },
  ],
  [{ icon: 'onedrive', text: 'OneDrive' }],
  [
    { icon: 'pc', text: '此电脑' },
    { icon: 'cube', text: '3D 对象' },
    { icon: 'video', text: '视频' },
    { icon: 'picture', text: '图片' },
    { icon: 'document', text: '文档' },
    { icon: 'download', text: '下载' },
    { icon: 'music', text: '音乐' },
    { icon: 'desktop', text: '桌面' },
    { icon: 'driveOs', text: 'OS (C:)' },
    { icon: 'drive', text: '本地磁盘 (D:)', selected: true },
    { icon: 'drive', text: '总裁装机U盘 (E:)' },
    { icon: 'drive', text: 'USMEFI (F:)' },
  ],
];

const files = [
  { icon: 'folder', name: 'learnSAS', date: '2022/2/18 12:42', type: '文件夹', size: '' },
  { icon: 'folder', name: 'nhanesR 0.9', date: '2022/4/3 10:11', type: '文件夹', size: '', state: 'selected' },
  { icon: 'folder', name: 'nhanesRmini', date: '2022/3/4 22:16', type: '文件夹', size: '', state: 'hover' },
  { icon: 'winrar', name: 'nhanesR_0.9.2.1.tgz', date: '2022/4/3 9:46', type: 'WinRAR archive', size: '1,622 KB' },
  { icon: 'winrar', name: 'nhanesR_0.9.2.1.zip', date: '2022/4/2 22:32', type: 'WinRAR ZIP archive', size: '1,793 KB' },
];

const apps = [
  { icon: 'explorer', active: true, running: true },
  { icon: 'sas' },
  { icon: 'word' },
  { icon: 'notepad' },
  { icon: 'excel' },
  { icon: 'wechat', running: true },
  { icon: 'chrome', running: true },
  { icon: 'rstudio', running: true },
  { icon: 'onenote', running: true },
  { icon: 'acrobat', running: true },
  { icon: 'redApp', running: true },
  { icon: 'baidu', running: true },
  { icon: 'vmware', running: true },
];

const tray = ['trayUp', 'trayNts', 'trayOnenote', 'trayRed', 'trayFlower', 'trayFlags', 'trayWechat', 'trayBattery', 'trayWifi', 'traySound'];
const imeTray = ['trayPen', 'trayZh', 'trayQ'];
</script>

<style>
body {
  margin: 0;
}
</style>

<style scoped>
.desktop {
  display: flex;
  flex-direction: column;
  height: 100vh;
  overflow: hidden;
  background: #fdfdfd;
  color: #111;
  font: 18px/24px "Noto Sans", "Noto Sans CJK SC", sans-serif;
}

button {
  padding: 0;
  border: 0;
  background: none;
  color: inherit;
  font: inherit;
  white-space: nowrap;
}

svg {
  display: block;
  flex: none;
}

/* VMware chrome */
.vm-title {
  flex: none;
  height: 34px;
  border-bottom: 1px solid #dcdede;
  line-height: 34px;
  white-space: nowrap;
}

.vm-toolbar {
  display: flex;
  align-items: center;
  flex: none;
  height: 53px;
  padding-right: 32px;
  border-bottom: 2px solid #6d7073;
}

.vm-menu {
  display: flex;
  justify-content: flex-end;
  gap: 21px;
  width: 386px;
  margin-right: 14px;
  padding-bottom: 2px;
  overflow: hidden;
}

.tool-group {
  display: flex;
  align-items: center;
  gap: 12px;
  height: 34px;
  padding: 0 14px 0 17px;
  border-left: 1px solid #cfd1d2;
}

.tool-group.wide {
  gap: 15px;
  padding-right: 12px;
}

.tool-group.views {
  gap: 13px;
}

.tool-group.boxed {
  gap: 6px;
  padding: 0 10px;
}

.pressed {
  display: grid;
  place-items: center;
  width: 34px;
  height: 41px;
  box-sizing: border-box;
  border: 2px solid #c4c6c7;
  border-radius: 4px;
  background: #eceded;
}

.upload {
  display: flex;
  width: 156px;
  height: 39px;
  box-sizing: border-box;
  margin-left: auto;
  overflow: hidden;
  border: 2px solid #45aef4;
  border-radius: 6px;
  background: linear-gradient(#e2f5fe, #c3edfc);
  color: #5fb7f4;
}

.upload-logo {
  display: grid;
  place-items: center;
  width: 44px;
  height: 100%;
  background: #209ff8;
}

.upload-text {
  flex: 1;
  line-height: 35px;
}

.vm-tabs {
  display: flex;
  align-items: flex-end;
  flex: none;
  height: 47px;
  background: #e1e3e5;
}

.vm-tab {
  display: flex;
  align-items: center;
  gap: 6px;
  height: 40px;
  padding: 0 11px 0 3px;
  border-right: 1px solid #c2c4c6;
  border-radius: 0 5px 0 0;
  background: #fdfdfd;
  font-size: 17px;
  font-weight: 700;
}

.vm-tab button {
  margin-left: 6px;
}

.vm-screen {
  display: flex;
  flex-direction: column;
  flex: 1;
  min-height: 0;
  background: #000;
}

.mac-bar {
  display: flex;
  align-items: flex-start;
  flex: none;
  gap: 31px;
  height: 24px;
  box-sizing: border-box;
  margin: 0 344px;
  padding: 4px 36px 0 33px;
  overflow: hidden;
  background: linear-gradient(#fafafa, #e2e2e2);
  color: #4a4a4a;
  font-size: 22px;
  white-space: nowrap;
}

.mac-right {
  display: flex;
  gap: 19px;
  margin-left: auto;
}

.mac-ime {
  width: 25px;
  height: 26px;
  border-radius: 5px;
  background: #484848;
  color: #fff;
  font-size: 18px;
  text-align: center;
}

.mac-clock {
  margin: 0 18px 0 14px;
}

.mac-right svg:last-child {
  margin-left: 8px;
}

.mac-edge {
  flex: none;
  height: 4px;
  margin: 0 344px;
  background: #1f1814;
}

/* Explorer window */
.explorer {
  position: relative;
  z-index: 1;
  display: flex;
  flex-direction: column;
  flex: 1;
  min-height: 0;
  margin: 0 342px 0 284px;
  background: #fdfdfd;
  box-shadow: 0 12px 24px rgba(0, 0, 0, .3);
}

.ex-title {
  display: flex;
  align-items: center;
  flex: none;
  gap: 14px;
  height: 45px;
  padding-left: 13px;
}

.ex-title .bar {
  width: 1px;
  height: 20px;
  margin-right: 1px;
  background: #8d8f91;
}

.ex-title .bar.last {
  margin: 0 0 0 3px;
}

.ex-title h1 {
  margin: 0 0 0 -7px;
  font-size: 18px;
  font-weight: 400;
}

.win-buttons {
  display: flex;
  height: 100%;
  margin-left: auto;
}

.win-buttons button {
  display: grid;
  place-items: center;
  width: 70px;
}

.ex-tabs {
  display: flex;
  align-items: flex-start;
  flex: none;
  height: 37px;
  border-bottom: 1px solid #dadcdc;
  color: #333;
}

.ex-tabs > button {
  width: 77px;
  height: 36px;
}

.ex-tabs .file {
  width: 85px;
  height: 34px;
  background: #0464b2;
  color: #fff;
}

.ex-tabs .active {
  width: 76px;
  height: 38px;
  box-sizing: border-box;
  padding-bottom: 3px;
  border: 1px solid #dadcdc;
  border-bottom: 0;
  background: #f2f4f4;
}

.ex-help {
  display: flex;
  align-items: center;
  gap: 12px;
  height: 36px;
  margin-left: auto;
  padding-right: 6px;
}

.ex-help .help {
  width: 22px;
  height: 22px;
  border-radius: 50%;
  background: #0963b4;
  color: #fff;
  font-size: 17px;
  line-height: 22px;
}

.ribbon {
  display: flex;
  flex: none;
  height: 149px;
  border-bottom: 1px solid #d5d7d8;
  background: #f2f4f4;
  color: #333;
}

.ribbon-group {
  display: flex;
  flex-direction: column;
  box-sizing: border-box;
  margin: 4px 0 3px;
  border-right: 1px solid #dcdfdf;
}

.clipboard {
  width: 368px;
}

.clipboard .ribbon-body {
  padding-left: 10px;
}

.organize {
  width: 275px;
}

.organize .big {
  width: 62px;
}

.new {
  width: 198px;
}

.open {
  width: 187px;
}

.select {
  width: 123px;
}

.ribbon-body {
  display: flex;
  flex: 1;
  padding-left: 3px;
}

.ribbon-label {
  height: 25px;
  color: #555;
  text-align: center;
}

.big {
  display: flex;
  flex-direction: column;
  align-items: center;
  width: 63px;
  padding-top: 7px;
}

.big.xl {
  width: 76px;
}

.big-icon {
  display: grid;
  place-items: center;
  height: 46px;
  margin-bottom: 5px;
}

.off {
  color: #85898c;
}

.divider {
  width: 2px;
  height: 99px;
  margin: 6px 3px 0 7px;
  background: #dddfe0;
}

.small-list {
  display: flex;
  flex-direction: column;
  margin-left: 5px;
  padding-top: 2px;
}

.small-list button {
  display: flex;
  align-items: center;
  gap: 5px;
  height: 32px;
}

.open .small-list button {
  height: 36px;
}

.small-icon {
  display: grid;
  place-items: center;
  width: 23px;
}

.address-row {
  display: flex;
  align-items: flex-start;
  flex: none;
  height: 53px;
  padding: 5px 13px 0 6px;
}

.go {
  display: grid;
  place-items: center;
  width: 46px;
  height: 46px;
}

.go.recent {
  width: 22px;
}

.go.up {
  width: 39px;
}

.address {
  display: flex;
  align-items: center;
  flex: 1;
  gap: 12px;
  height: 44px;
  margin-right: 11px;
  padding-left: 5px;
  border: 1px solid #d6d8d8;
}

.drop {
  margin-left: auto;
  padding: 0 4px;
}

.refresh {
  display: grid;
  place-items: center;
  width: 50px;
  height: 100%;
  border-left: 1px solid #d6d8d8;
}

.search {
  display: flex;
  align-items: center;
  gap: 20px;
  width: 492px;
  height: 44px;
  padding-left: 20px;
  border: 1px solid #d6d8d8;
}

.search input {
  flex: 1;
  padding: 0;
  border: 0;
  outline: 0;
  background: none;
  font: inherit;
}

.search input::placeholder {
  color: #696c6f;
  opacity: 1;
}

.ex-main {
  display: flex;
  flex: 1;
  min-height: 0;
}

.tree {
  width: 210px;
  padding-top: 24px;
  overflow: hidden;
}

.tree ul {
  margin: 0 0 12px;
  padding: 0;
  list-style: none;
}

.tree li {
  display: flex;
  align-items: center;
  height: 36px;
  margin-right: 2px;
  padding-left: 36px;
}

.tree li.child {
  padding-left: 48px;
}

.tree li.selected {
  background: #d7d7d7;
}

.tree a {
  display: flex;
  align-items: center;
  gap: 5px;
  color: #111;
  text-decoration: none;
  white-space: nowrap;
}

.tree-icon {
  display: grid;
  place-items: center;
  width: 25px;
}

.tree-pin {
  margin: 0 4px 0 auto;
}

.scrollbar {
  display: flex;
  flex-direction: column;
  width: 24px;
  background: #ededed;
}

.scrollbar button {
  display: grid;
  place-items: center;
  height: 26px;
}

.scrollbar button:last-child {
  margin-top: auto;
}

.thumb {
  height: 81%;
  background: #cacaca;
}

.list {
  position: relative;
  flex: 1;
  margin-left: 4px;
  padding-left: 23px;
  border-left: 1px solid #f2f3f3;
}

table {
  width: 1018px;
  table-layout: fixed;
  border-spacing: 0;
}

th {
  height: 39px;
  box-sizing: border-box;
  padding: 2px 0 0 9px;
  border-right: 1px solid #e1e3e4;
  color: #4f6070;
  font-weight: 400;
  text-align: left;
}

th:nth-child(4) {
  border-right: 0;
}

.c-name {
  position: relative;
  width: 438px;
  padding-left: 5px;
}

.c-date {
  width: 243px;
}

.c-type {
  width: 203px;
}

.c-size {
  width: 129px;
}

.c-end {
  padding: 0;
}

.sort {
  position: absolute;
  top: 1px;
  left: 211px;
}

tbody::before {
  content: "";
  display: block;
  height: 10px;
}

td {
  height: 32px;
  box-sizing: border-box;
  padding: 0 9px;
  border: 1px solid transparent;
  border-width: 1px 0;
  color: #6b6f72;
  white-space: nowrap;
}

td:first-child {
  padding-left: 4px;
  border-left-width: 1px;
  color: #111;
}

td.size {
  padding-right: 6px;
  border-right-width: 1px;
  text-align: right;
}

.cell {
  display: flex;
  align-items: center;
  gap: 6px;
}

.file-icon {
  display: grid;
  place-items: center;
  width: 25px;
}

.selected td {
  border-color: #93c9e2;
  background: #c9e6fc;
}

.hover td {
  background: #e2f1fb;
}

.halo {
  position: absolute;
  top: 63px;
  left: 156px;
  width: 120px;
  height: 120px;
  border-radius: 50%;
  background: rgba(240, 180, 70, .4);
}

.cursor {
  position: absolute;
  top: 122px;
  left: 215px;
}

.ex-status {
  display: flex;
  align-items: center;
  flex: none;
  height: 37px;
  padding-left: 23px;
  color: #34495c;
}

.ex-status > span {
  margin-right: 16px;
  padding-right: 17px;
  border-right: 1px solid #eceeee;
}

.ex-views {
  display: flex;
  align-items: center;
  gap: 6px;
  margin-left: auto;
  padding-right: 14px;
}

.ex-views .on {
  display: grid;
  place-items: center;
  width: 33px;
  height: 35px;
  box-sizing: border-box;
  border: 1px solid #4ba3c3;
  background: #cbe9f6;
}

/* VMware status line and the Windows taskbar */
.vm-status {
  display: flex;
  align-items: center;
  flex: none;
  height: 30px;
  border-top: 1px solid #6d6d6d;
  background: #e2e4e6;
  white-space: nowrap;
}

.vm-devices {
  display: flex;
  gap: 6px;
  margin-left: auto;
  padding-right: 3px;
}

.taskbar {
  position: relative;
  z-index: 2;
  display: flex;
  flex: none;
  height: 60px;
  background: linear-gradient(90deg, #cbe6ec, #cce4ec 60%, #d2dce9);
}

.apps {
  display: flex;
  padding-left: 19px;
}

.apps button {
  position: relative;
  display: grid;
  place-items: center;
  width: 75px;
}

.apps .active {
  background: #e6f4f6;
}

.apps .running::after {
  content: "";
  position: absolute;
  right: 7px;
  bottom: 0;
  left: 7px;
  height: 3px;
  background: #0f73c0;
}

.apps .active::after {
  right: 0;
  left: 0;
}

.tray {
  display: flex;
  margin-left: auto;
}

.tray button {
  display: grid;
  place-items: center;
  width: 36px;
}

.tray.ime {
  margin-left: 4px;
}

.tray.ime button {
  width: 42px;
}

.clock {
  width: 51px;
  margin-left: 22px;
  padding-top: 1px;
  overflow: hidden;
  line-height: 29px;
  white-space: nowrap;
}

.clock div:first-child {
  padding-left: 19px;
}
</style>
